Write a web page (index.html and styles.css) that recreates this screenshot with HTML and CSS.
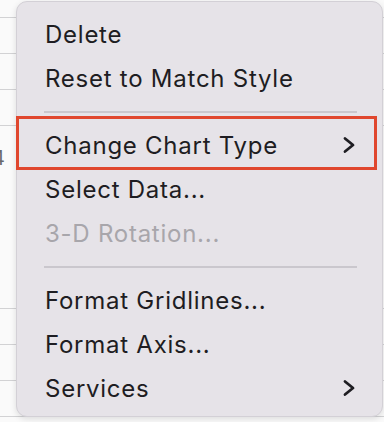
FILE: index.html
```html
<!DOCTYPE html>
<html>
<head>
<meta charset="utf-8">
<link rel="stylesheet" href="styles.css">
</head>
<body>
<div class="sheet">
  <div class="row r0"></div>
  <div class="row"></div>
  <div class="row"></div>
  <div class="row"></div>
  <div class="chart"><span class="axis-label">4</span></div>
  <div class="row"></div>
  <div class="row"></div>
  <div class="row"></div>
  <div class="row"></div>
</div>
<div class="menu">
  <div class="item">Delete</div>
  <div class="item">Reset to Match Style</div>
  <div class="sep"></div>
  <div class="item highlight">Change Chart Type
    <svg class="chev" width="14" height="18" viewBox="0 0 14 18"><path d="M3 2.5 L11 9 L3 15.5" fill="none" stroke="#1e1d22" stroke-width="2.8" stroke-linecap="round" stroke-linejoin="round"/></svg>
  </div>
  <div class="item">Select Data...</div>
  <div class="item disabled">3-D Rotation...</div>
  <div class="sep"></div>
  <div class="item">Format Gridlines...</div>
  <div class="item">Format Axis...</div>
  <div class="item">Services
    <svg class="chev" width="14" height="18" viewBox="0 0 14 18"><path d="M3 2.5 L11 9 L3 15.5" fill="none" stroke="#1e1d22" stroke-width="2.8" stroke-linecap="round" stroke-linejoin="round"/></svg>
  </div>
</div>
</body>
</html>
```
FILE: styles.css
```css
html, body {
  margin: 0;
  padding: 0;
}
body {
  width: 384px;
  height: 422px;
  overflow: hidden;
  position: relative;
  background: #fafafa;
  font-family: Inter, "Liberation Sans", sans-serif;
}
.sheet {
  display: flex;
  flex-direction: column;
}
.row {
  height: 36px;
  border-bottom: 1px solid #d2d2d4;
  box-sizing: border-box;
}
.row.r0 {
  height: 18px;
}
.chart {
  height: 147px;
  position: relative;
  background: #fafafa;
}
.axis-label {
  position: absolute;
  left: -8px;
  top: 20px;
  font-size: 20px;
  color: #6a6a6a;
}
.menu {
  position: absolute;
  left: 16px;
  top: 1px;
  width: 367px;
  height: 416px;
  box-sizing: border-box;
  background: #e6e3e8;
  border-radius: 11px;
  border: 1px solid #d3d0d6;
  box-shadow: 0 2px 6px rgba(0,0,0,0.12);
  padding-top: 10px;
  display: flex;
  flex-direction: column;
}
.item {
  height: 44px;
  display: flex;
  align-items: center;
  justify-content: space-between;
  padding-left: 28px;
  padding-right: 26px;
  font-size: 24px;
  color: #1e1d22;
  letter-spacing: 0.75px;
  box-sizing: border-box;
  flex: none;
}
.item.disabled {
  color: #a8a6ab;
}
.item.highlight {
  margin-left: -1px;
  margin-right: 5px;
  padding-left: 26px;
  padding-right: 18px;
  height: 54px;
  margin-top: -7px;
  margin-bottom: -3px;
  padding-top: 4px;
  border: 3px solid #e0472e;
  position: relative;
}
.sep {
  height: 23px;
  flex: none;
  display: flex;
  align-items: center;
  padding: 0 25px 0 27px;
}
.sep::before {
  content: "";
  flex: 1;
  height: 2px;
  background: #cac7cd;
}
.chev {
  flex: none;
}
```
